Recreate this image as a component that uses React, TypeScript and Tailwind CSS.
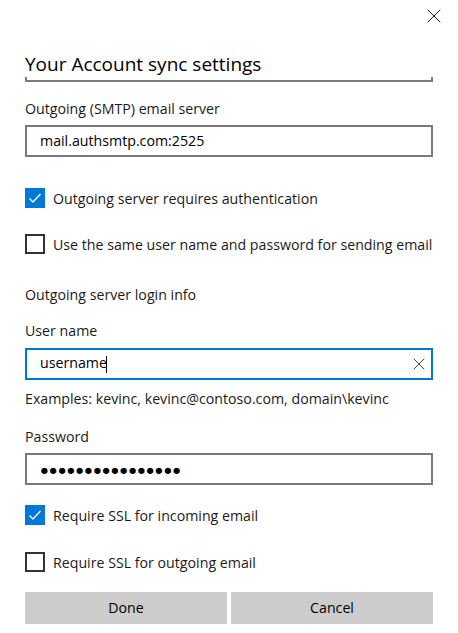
import { X } from 'lucide-react'

const FONT = "font-['Segoe_UI','Open_Sans','Noto_Sans',sans-serif]"

function CheckRow({ checked, label }: { checked: boolean; label: string }) {
  return (
    <label className="flex items-center gap-2 h-5">
      {checked ? (
        <span className="w-5 h-5 bg-[#0078d7] flex items-center justify-center">
          <svg width="16" height="16" viewBox="0 0 16 16" fill="none">
            <path d="M2.5 8.5 L6 12 L13.5 4" stroke="white" strokeWidth="1.3" />
          </svg>
        </span>
      ) : (
        <span className="w-5 h-5 border-2 border-[#333]" />
      )}
      <span className="text-[14.2px] text-[#1a1a1a] pt-px">{label}</span>
    </label>
  )
}

function Field({ value, focused, clear, secret }: { value: string; focused?: boolean; clear?: boolean; secret?: boolean }) {
  return (
    <div
      className={`h-[32px] border-2 flex items-center pl-[13px] ${clear ? 'pr-[2px]' : 'pr-3'} ${
        focused ? 'border-[#0078d7]' : 'border-[#7a7a7a]'
      }`}
    >
      <span className={`flex-1 text-black leading-none ${secret ? 'text-[14.6px]' : 'text-[14.2px]'}`}>
        {value}
        {focused && <span className="inline-block w-px h-[17px] bg-black align-middle -ml-[1px]" />}
      </span>
      {clear && <X size={20} strokeWidth={1.1} className="text-[#333]" />}
    </div>
  )
}

export default function App() {
  return (
    <div className={`${FONT} w-[458px] h-[633px] bg-white relative text-[#1a1a1a]`}>
      <button className="absolute top-[4px] right-[12px] text-[#1a1a1a]">
        <X size={24} strokeWidth={1} />
      </button>

      <div className="px-[25px] pt-[51px] flex flex-col">
        <div className="border-b-2 border-[#7a7a7a] relative pb-[3px]">
          <h1 className="text-[19px] leading-[26px] text-black">Your Account sync settings</h1>
          <span className="absolute left-0 -bottom-[2px] w-[2px] h-[5px] bg-[#7a7a7a]" />
          <span className="absolute right-0 -bottom-[2px] w-[2px] h-[5px] bg-[#7a7a7a]" />
        </div>

        <p className="mt-[17px] text-[14.2px] leading-5">Outgoing (SMTP) email server</p>
        <div className="mt-[6px]">
          <Field value="mail.authsmtp.com:2525" />
        </div>

        <div className="mt-[31px]">
          <CheckRow checked label="Outgoing server requires authentication" />
        </div>
        <div className="mt-[26px]">
          <CheckRow checked={false} label="Use the same user name and password for sending email" />
        </div>

        <p className="mt-[31px] text-[14.2px] leading-5">Outgoing server login info</p>
        <p className="mt-[16px] text-[14.2px] leading-5">User name</p>
        <div className="mt-[7px]">
          <Field value="username" focused clear />
        </div>
        <p className="mt-[9px] text-[14.2px] leading-5">Examples: kevinc, kevinc@contoso.com, domain\kevinc</p>

        <p className="mt-[18px] text-[14.2px] leading-5">Password</p>
        <div className="mt-[6px]">
          <Field value="●●●●●●●●●●●●●●●●" secret />
        </div>

        <div className="mt-[20px]">
          <CheckRow checked label="Require SSL for incoming email" />
        </div>
        <div className="mt-[27px]">
          <CheckRow checked={false} label="Require SSL for outgoing email" />
        </div>

        <div className="mt-[20px] flex gap-[4px]">
          <button className="flex-1 h-[32px] bg-[#cccccc] text-[14.2px] text-black">Done</button>
          <button className="flex-1 h-[32px] bg-[#cccccc] text-[14.2px] text-black">Cancel</button>
        </div>
      </div>
    </div>
  )
}
